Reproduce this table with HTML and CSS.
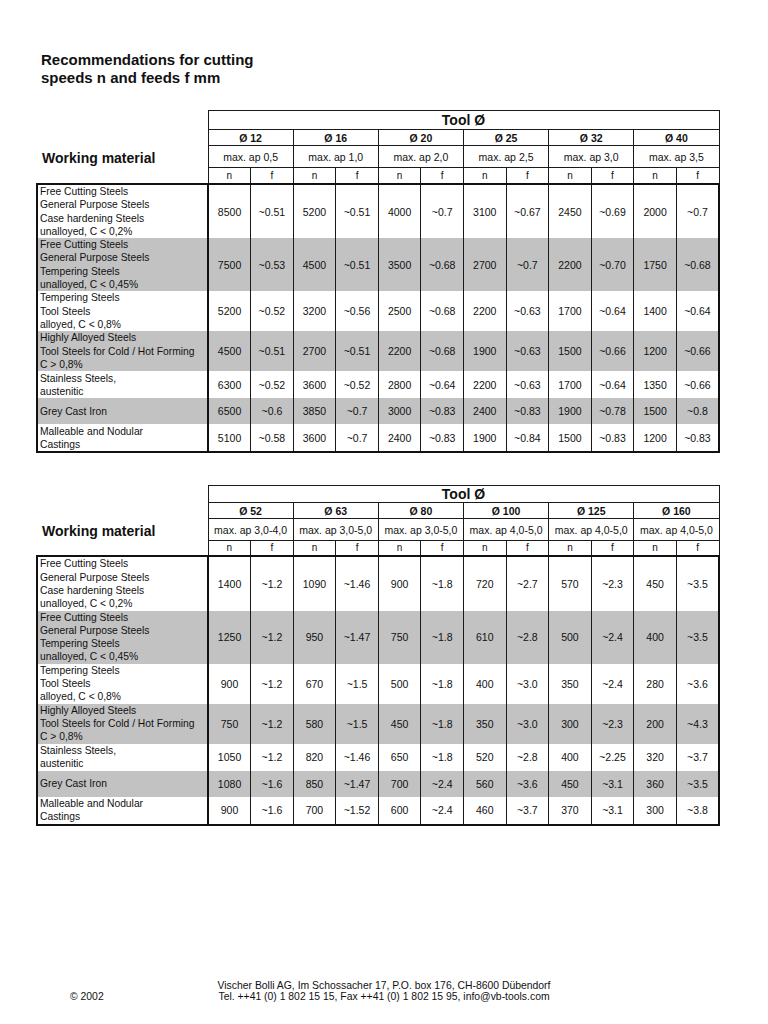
FILE: index.html
```html
<!DOCTYPE html>
<html lang="en">
<head>
<meta charset="utf-8">
<title>Recommendations for cutting speeds</title>
<link rel="stylesheet" href="styles.css">
</head>
<body>
<main class="page">
  <h1 class="title">Recommendations for cutting<br>speeds n and feeds f mm</h1>

  <table class="cut">
    <colgroup>
      <col class="c-mat"><col><col><col><col><col><col><col><col><col><col><col><col>
    </colgroup>
    <thead>
      <tr class="r-tool"><th class="blank"></th><th colspan="12" class="tool">Tool Ø</th></tr>
      <tr class="r-dia"><th rowspan="3" class="wm">Working material</th>
        <th colspan="2">Ø 12</th><th colspan="2">Ø 16</th><th colspan="2">Ø 20</th><th colspan="2">Ø 25</th><th colspan="2">Ø 32</th><th colspan="2" class="last">Ø 40</th></tr>
      <tr class="r-ap">
        <td colspan="2">max. ap 0,5</td><td colspan="2">max. ap 1,0</td><td colspan="2">max. ap 2,0</td><td colspan="2">max. ap 2,5</td><td colspan="2">max. ap 3,0</td><td colspan="2" class="last">max. ap 3,5</td></tr>
      <tr class="r-nf">
        <td>n</td><td>f</td><td>n</td><td>f</td><td>n</td><td>f</td><td>n</td><td>f</td><td>n</td><td>f</td><td>n</td><td class="last">f</td></tr>
    </thead>
    <tbody>
      <tr class="h4 first"><td class="mat">Free Cutting Steels<br>General Purpose Steels<br>Case hardening Steels<br>unalloyed, C &lt; 0,2%</td>
        <td>8500</td><td>~0.51</td><td>5200</td><td>~0.51</td><td>4000</td><td>~0.7</td><td>3100</td><td>~0.67</td><td>2450</td><td>~0.69</td><td>2000</td><td class="last">~0.7</td></tr>
      <tr class="h4 shade"><td class="mat">Free Cutting Steels<br>General Purpose Steels<br>Tempering Steels<br>unalloyed, C &lt; 0,45%</td>
        <td>7500</td><td>~0.53</td><td>4500</td><td>~0.51</td><td>3500</td><td>~0.68</td><td>2700</td><td>~0.7</td><td>2200</td><td>~0.70</td><td>1750</td><td class="last">~0.68</td></tr>
      <tr class="h3"><td class="mat">Tempering Steels<br>Tool Steels<br>alloyed, C &lt; 0,8%</td>
        <td>5200</td><td>~0.52</td><td>3200</td><td>~0.56</td><td>2500</td><td>~0.68</td><td>2200</td><td>~0.63</td><td>1700</td><td>~0.64</td><td>1400</td><td class="last">~0.64</td></tr>
      <tr class="h3 shade"><td class="mat">Highly Alloyed Steels<br>Tool Steels for Cold / Hot Forming<br>C &gt; 0,8%</td>
        <td>4500</td><td>~0.51</td><td>2700</td><td>~0.51</td><td>2200</td><td>~0.68</td><td>1900</td><td>~0.63</td><td>1500</td><td>~0.66</td><td>1200</td><td class="last">~0.66</td></tr>
      <tr class="h2"><td class="mat">Stainless Steels,<br>austenitic</td>
        <td>6300</td><td>~0.52</td><td>3600</td><td>~0.52</td><td>2800</td><td>~0.64</td><td>2200</td><td>~0.63</td><td>1700</td><td>~0.64</td><td>1350</td><td class="last">~0.66</td></tr>
      <tr class="h1 shade"><td class="mat">Grey Cast Iron</td>
        <td>6500</td><td>~0.6</td><td>3850</td><td>~0.7</td><td>3000</td><td>~0.83</td><td>2400</td><td>~0.83</td><td>1900</td><td>~0.78</td><td>1500</td><td class="last">~0.8</td></tr>
      <tr class="h2 end"><td class="mat">Malleable and Nodular<br>Castings</td>
        <td>5100</td><td>~0.58</td><td>3600</td><td>~0.7</td><td>2400</td><td>~0.83</td><td>1900</td><td>~0.84</td><td>1500</td><td>~0.83</td><td>1200</td><td class="last">~0.83</td></tr>
    </tbody>
  </table>

  <table class="cut second">
    <colgroup>
      <col class="c-mat"><col><col><col><col><col><col><col><col><col><col><col><col>
    </colgroup>
    <thead>
      <tr class="r-tool"><th class="blank"></th><th colspan="12" class="tool">Tool Ø</th></tr>
      <tr class="r-dia"><th rowspan="3" class="wm">Working material</th>
        <th colspan="2">Ø 52</th><th colspan="2">Ø 63</th><th colspan="2">Ø 80</th><th colspan="2">Ø 100</th><th colspan="2">Ø 125</th><th colspan="2" class="last">Ø 160</th></tr>
      <tr class="r-ap">
        <td colspan="2">max. ap 3,0-4,0</td><td colspan="2">max. ap 3,0-5,0</td><td colspan="2">max. ap 3,0-5,0</td><td colspan="2">max. ap 4,0-5,0</td><td colspan="2">max. ap 4,0-5,0</td><td colspan="2" class="last">max. ap 4,0-5,0</td></tr>
      <tr class="r-nf">
        <td>n</td><td>f</td><td>n</td><td>f</td><td>n</td><td>f</td><td>n</td><td>f</td><td>n</td><td>f</td><td>n</td><td class="last">f</td></tr>
    </thead>
    <tbody>
      <tr class="h4 first"><td class="mat">Free Cutting Steels<br>General Purpose Steels<br>Case hardening Steels<br>unalloyed, C &lt; 0,2%</td>
        <td>1400</td><td>~1.2</td><td>1090</td><td>~1.46</td><td>900</td><td>~1.8</td><td>720</td><td>~2.7</td><td>570</td><td>~2.3</td><td>450</td><td class="last">~3.5</td></tr>
      <tr class="h4 shade"><td class="mat">Free Cutting Steels<br>General Purpose Steels<br>Tempering Steels<br>unalloyed, C &lt; 0,45%</td>
        <td>1250</td><td>~1.2</td><td>950</td><td>~1.47</td><td>750</td><td>~1.8</td><td>610</td><td>~2.8</td><td>500</td><td>~2.4</td><td>400</td><td class="last">~3.5</td></tr>
      <tr class="h3"><td class="mat">Tempering Steels<br>Tool Steels<br>alloyed, C &lt; 0,8%</td>
        <td>900</td><td>~1.2</td><td>670</td><td>~1.5</td><td>500</td><td>~1.8</td><td>400</td><td>~3.0</td><td>350</td><td>~2.4</td><td>280</td><td class="last">~3.6</td></tr>
      <tr class="h3 shade"><td class="mat">Highly Alloyed Steels<br>Tool Steels for Cold / Hot Forming<br>C &gt; 0,8%</td>
        <td>750</td><td>~1.2</td><td>580</td><td>~1.5</td><td>450</td><td>~1.8</td><td>350</td><td>~3.0</td><td>300</td><td>~2.3</td><td>200</td><td class="last">~4.3</td></tr>
      <tr class="h2"><td class="mat">Stainless Steels,<br>austenitic</td>
        <td>1050</td><td>~1.2</td><td>820</td><td>~1.46</td><td>650</td><td>~1.8</td><td>520</td><td>~2.8</td><td>400</td><td>~2.25</td><td>320</td><td class="last">~3.7</td></tr>
      <tr class="h1 shade"><td class="mat">Grey Cast Iron</td>
        <td>1080</td><td>~1.6</td><td>850</td><td>~1.47</td><td>700</td><td>~2.4</td><td>560</td><td>~3.6</td><td>450</td><td>~3.1</td><td>360</td><td class="last">~3.5</td></tr>
      <tr class="h2 end"><td class="mat">Malleable and Nodular<br>Castings</td>
        <td>900</td><td>~1.6</td><td>700</td><td>~1.52</td><td>600</td><td>~2.4</td><td>460</td><td>~3.7</td><td>370</td><td>~3.1</td><td>300</td><td class="last">~3.8</td></tr>
    </tbody>
  </table>

  <footer class="foot">
    <span class="copy">© 2002</span>
    <address class="addr">Vischer Bolli AG, Im Schossacher 17, P.O. box 176, CH-8600 Dübendorf<br>Tel. ++41 (0) 1 802 15 15, Fax ++41 (0) 1 802 15 95, info@vb-tools.com</address>
    <span></span>
  </footer>
</main>
</body>
</html>
```

FILE: styles.css
```css
html, body {
  margin: 0;
  padding: 0;
  background: #fff;
}

body {
  font-family: "Liberation Sans", Arial, Helvetica, sans-serif;
  color: #111;
}

.page {
  width: 768px;
  height: 1024px;
  box-sizing: border-box;
  padding: 51px 0 0 36px;
}

.title {
  margin: 0 0 0 5px;
  font-size: 15px;
  line-height: 18px;
  font-weight: bold;
}

.cut {
  margin-top: 23px;
  border-collapse: collapse;
  table-layout: fixed;
  width: 684px;
  font-size: 10.5px;
  color: #111;
}

.cut.second {
  margin-top: 32px;
}

.c-mat {
  width: 171px;
}

.cut th,
.cut td {
  padding: 0;
  text-align: center;
  vertical-align: middle;
  white-space: nowrap;
  overflow: hidden;
}

/* header */
.cut thead th,
.cut thead td {
  border: 1px solid #1a1a1a;
}

.cut thead .blank,
.cut thead .wm {
  border: none;
}

.cut thead .last,
.cut thead .tool {
  border-right: 1.5px solid #1a1a1a;
}

.r-tool th {
  height: 18px;
}

.cut .tool {
  text-align: center;
  font-size: 14px;
  font-weight: bold;
  line-height: 16px;
}

.r-dia th {
  height: 15px;
  font-size: 10.5px;
  font-weight: bold;
  line-height: 12px;
}

.cut .r-dia .wm {
  text-align: left;
  padding: 4px 0 0 5px;
  font-size: 14px;
  line-height: 16px;
  font-weight: bold;
}

.r-ap td {
  height: 21px;
  line-height: 12px;
}

.r-nf td {
  height: 15px;
  line-height: 12px;
  font-size: 10px;
}

.second .r-tool th {
  height: 16px;
}

.second .r-nf td {
  height: 14px;
}

/* body */
.cut tbody td {
  border-left: 1px solid #1a1a1a;
  border-right: 1px solid #1a1a1a;
}

.cut tbody td.mat {
  border-left: 2px solid #111;
  border-right: 2px solid #111;
  text-align: left;
  padding-left: 2px;
  font-size: 10.3px;
  line-height: 13.3px;
}

.cut tbody td.last {
  border-right: 2px solid #111;
}

.cut tbody tr.first td {
  border-top: 2px solid #111;
}

.cut tbody tr.end td {
  border-bottom: 2px solid #111;
}

.shade td {
  background: #c2c2c2;
}

.h4 td { height: 53px; }
.h3 td { height: 40px; }
.h2 td { height: 27px; }
.h1 td { height: 26px; }

/* footer */
.foot {
  margin: 154px 0 0 -36px;
  width: 768px;
  display: grid;
  grid-template-columns: 1fr auto 1fr;
  font-size: 10.4px;
  line-height: 11px;
  color: #111;
}

.copy {
  align-self: end;
  justify-self: start;
  margin-left: 70px;
}

.addr {
  font-style: normal;
  text-align: center;
}
```
